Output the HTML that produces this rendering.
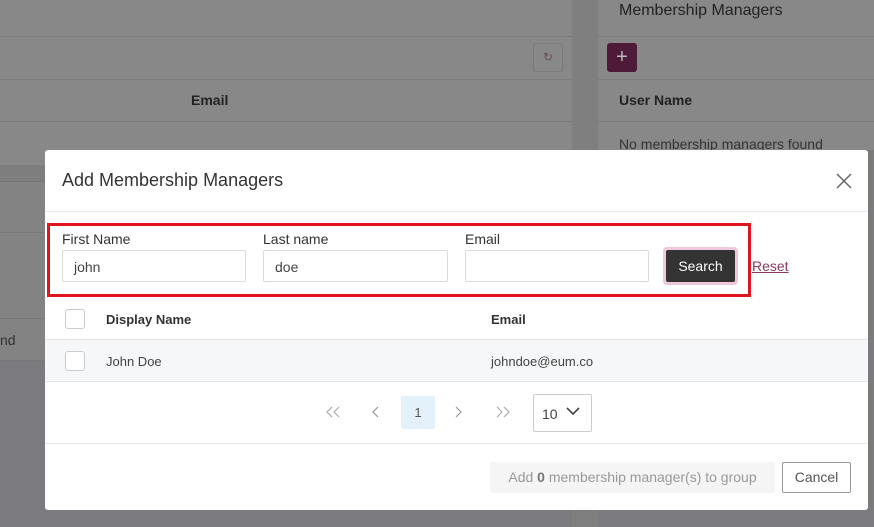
<!DOCTYPE html>
<html><head><style>
*{box-sizing:border-box;margin:0;padding:0}
body{width:874px;height:527px;overflow:hidden;background:#7b7b7f;font-family:"Liberation Sans",sans-serif;position:relative}
.a{position:absolute}
.t{color:#333;font-size:14px}
.inp{position:absolute;background:#fff;border:1px solid #dcdcdc;border-radius:2px;height:32px;font-size:14px;color:#444;padding:8px 11px}
.cb{position:absolute;width:20px;height:20px;border:1px solid #ccc;border-radius:3px;background:#fff}
</style></head><body>
<div class="a" style="left:0;top:0;width:572px;height:360px;background:#838383"></div>
<div class="a" style="left:0;top:0;width:572px;height:165px;background:#888"></div>
<div class="a" style="left:0;top:36px;width:572px;height:1px;background:#7a7a7a"></div>
<div class="a" style="left:0;top:79px;width:572px;height:1px;background:#7d7d7d"></div>
<div class="a" style="left:0;top:121px;width:572px;height:1px;background:#7a7a7a"></div>
<div class="a" style="left:0;top:165px;width:572px;height:16px;background:#7e7e7e"></div>
<div class="a" style="left:0;top:181px;width:45px;height:1px;background:#777"></div>
<div class="a" style="left:0;top:232px;width:45px;height:1px;background:#7a7a7a"></div>
<div class="a" style="left:0;top:318px;width:45px;height:1px;background:#777"></div>
<div class="a" style="left:0;top:360px;width:45px;height:1px;background:#777"></div>
<div class="a" style="left:572px;top:0;width:26px;height:527px;background:#7f7f7f"></div>
<div class="a" style="left:598px;top:0;width:276px;height:150px;background:#888"></div>
<div class="a" style="left:598px;top:36px;width:276px;height:1px;background:#7a7a7a"></div>
<div class="a" style="left:598px;top:79px;width:276px;height:1px;background:#7d7d7d"></div>
<div class="a" style="left:598px;top:121px;width:276px;height:1px;background:#7a7a7a"></div>
<div class="a" style="left:533px;top:43px;width:30px;height:29px;border:1px solid #7a7a7a;border-radius:3px;color:#6a4a5a;font-size:12px;text-align:center;line-height:27px">↻</div>
<div class="a" style="left:607px;top:43px;width:30px;height:29px;background:#4d1a38;border-radius:3px;color:#bbb;font-size:20px;text-align:center;line-height:28px">+</div>
<div class="a" style="left:619px;top:2px;font-size:16px;color:#222">Membership Managers</div>
<div class="a" style="left:191px;top:92px;font-size:14px;color:#222;font-weight:bold">Email</div>
<div class="a" style="left:619px;top:92px;font-size:14px;color:#222;font-weight:bold">User Name</div>
<div class="a" style="left:619px;top:136px;font-size:14px;color:#333">No membership managers found</div>
<div class="a" style="left:0;top:332px;font-size:14px;color:#333">nd</div>
<div class="a" style="left:45px;top:150px;width:823px;height:360px;background:#fff;border-radius:3px"></div>
<div class="a" style="left:62px;top:170px;font-size:18px;color:#333">Add Membership Managers</div>
<svg class="a" style="left:835px;top:172px" width="18" height="18"><path d="M2 2L16 16M16 2L2 16" stroke="#666" stroke-width="1.5"/></svg>
<div class="a" style="left:45px;top:211px;width:823px;height:1px;background:#e3e8ee"></div>
<div class="a" style="left:47px;top:223px;width:704px;height:74px;border:3px solid #e0141b"></div>
<div class="a t" style="left:62px;top:231px">First Name</div>
<div class="a t" style="left:263px;top:231px">Last name</div>
<div class="a t" style="left:465px;top:231px">Email</div>
<div class="inp" style="left:62px;top:250px;width:184px">john</div>
<div class="inp" style="left:263px;top:250px;width:185px">doe</div>
<div class="inp" style="left:465px;top:250px;width:184px"></div>
<div class="a" style="left:663px;top:247px;width:75px;height:38px;background:#f0c8dc;border-radius:4px"></div>
<div class="a" style="left:666px;top:250px;width:69px;height:32px;background:#333;border-radius:2px;color:#fff;font-size:14px;text-align:center;line-height:32px">Search</div>
<div class="a" style="left:752px;top:258px;font-size:14px;color:#8a3a66;text-decoration:underline">Reset</div>
<div class="cb" style="left:65px;top:309px"></div>
<div class="a t" style="left:106px;top:312px;font-weight:bold;font-size:13px">Display Name</div>
<div class="a t" style="left:491px;top:312px;font-weight:bold;font-size:13px">Email</div>
<div class="a" style="left:45px;top:339px;width:823px;height:1px;background:#e6e6e6"></div>
<div class="a" style="left:45px;top:340px;width:823px;height:41px;background:#f6f7f8"></div>
<div class="a" style="left:45px;top:381px;width:823px;height:1px;background:#e6e6e6"></div>
<div class="cb" style="left:65px;top:351px"></div>
<div class="a t" style="left:106px;top:354px;font-size:13px;color:#444">John Doe</div>
<div class="a t" style="left:491px;top:354px;font-size:13px;color:#444">johndoe@eum.co</div>
<svg class="a" style="left:325px;top:406px" width="16" height="12"><path d="M7 1L2 6L7 11M14 1L9 6L14 11" stroke="#aaa" stroke-width="1.2" fill="none"/></svg>
<svg class="a" style="left:372px;top:406px" width="8" height="12"><path d="M6 1L1 6L6 11" stroke="#999" stroke-width="1.2" fill="none"/></svg>
<div class="a" style="left:401px;top:396px;width:34px;height:33px;background:#e3f1fb;border-radius:2px;color:#555;font-size:13px;text-align:center;line-height:33px">1</div>
<svg class="a" style="left:455px;top:406px" width="8" height="12"><path d="M1 1L6 6L1 11" stroke="#999" stroke-width="1.2" fill="none"/></svg>
<svg class="a" style="left:495px;top:406px" width="16" height="12"><path d="M2 1L7 6L2 11M9 1L14 6L9 11" stroke="#aaa" stroke-width="1.2" fill="none"/></svg>
<div class="a" style="left:533px;top:394px;width:59px;height:38px;border:1px solid #ccc;border-radius:2px;font-size:14px;color:#444;padding:11px 8px">10</div>
<svg class="a" style="left:566px;top:406px" width="14" height="10"><path d="M1 2L7 8L13 2" stroke="#444" stroke-width="1.6" fill="none"/></svg>
<div class="a" style="left:45px;top:443px;width:823px;height:1px;background:#e6e6e6"></div>
<div class="a" style="left:490px;top:462px;width:285px;height:31px;background:#f5f5f5;border-radius:2px;color:#999;font-size:14px;text-align:center;line-height:31px">Add <b style="color:#777">0</b> membership manager(s) to group</div>
<div class="a" style="left:782px;top:462px;width:69px;height:31px;border:1px solid #999;border-radius:2px;color:#555;font-size:14px;text-align:center;line-height:29px">Cancel</div>
</body></html>
